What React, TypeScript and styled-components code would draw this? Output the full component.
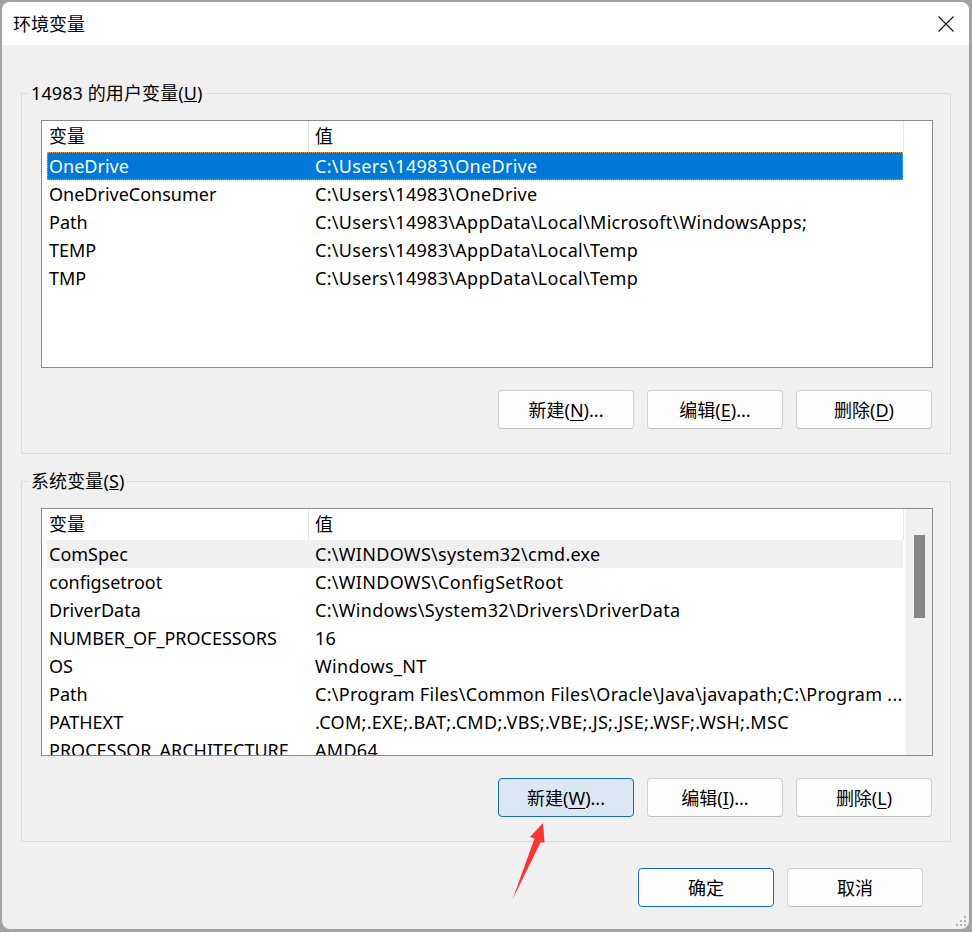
import React from 'react';
import styled, { createGlobalStyle } from 'styled-components';

const GlobalStyle = createGlobalStyle`
  html, body { margin: 0; padding: 0; background: #a3a3a3; }
  body { font-family: "Noto Sans", "Noto Sans CJK SC", sans-serif; }
  * { box-sizing: border-box; }
`;

const Page = styled.div`
  position: relative;
  width: 972px;
  height: 932px;
  padding: 2px 0 0 2px;
  overflow: hidden;
`;

const Window = styled.div`
  position: relative;
  width: 967px;
  height: 927px;
  background: #f0f0f0;
  border-radius: 8px;
  overflow: hidden;
  display: flex;
  flex-direction: column;
  font-size: 18px;
  color: #000;
`;

const TitleBar = styled.div`
  height: 43px;
  flex: none;
  background: #fff;
  display: flex;
  align-items: center;
  justify-content: space-between;
  padding-left: 11px;
`;

const Title = styled.div`
  font-size: 18px;
  line-height: 24px;
`;

const CloseButton = styled.div`
  width: 47px;
  height: 43px;
  display: flex;
  align-items: center;
  justify-content: center;
`;

const Body = styled.div`
  flex: 1;
  display: flex;
  flex-direction: column;
  padding: 36px 18px 0 19px;
`;

const Group = styled.fieldset`
  margin: 0;
  min-width: 0;
  padding: 15px 17px 24px 19px;
  border: 1px solid #dadada;
  & + & {
    margin-top: 15px;
  }
`;

const Legend = styled.legend`
  padding: 0 3px;
  margin-left: -13px;
  font-size: 18px;
  line-height: 24px;
  letter-spacing: 0.1px;
`;

const ListView = styled.div`
  height: 248px;
  border: 1px solid #8a8a8a;
  background: #fff;
  display: flex;
  overflow: hidden;
`;

const ListContent = styled.div`
  flex: 1;
  padding-left: 5px;
  display: flex;
  flex-direction: column;
  overflow: hidden;
`;

const HeaderRow = styled.div`
  height: 31px;
  flex: none;
  display: flex;
`;

const HeaderCell = styled.div<{ $w: number; $pad: number }>`
  width: ${(p) => p.$w}px;
  flex: none;
  padding-left: ${(p) => p.$pad}px;
  border-right: 1px solid #e5e5e5;
  line-height: 31px;
  white-space: nowrap;
`;

const Row = styled.div<{ $state?: 'selected' | 'hover' }>`
  width: 856px;
  height: 28px;
  flex: none;
  display: flex;
  line-height: 28px;
  white-space: nowrap;
  background: ${(p) =>
    p.$state === 'selected' ? '#0078d7' : p.$state === 'hover' ? '#f0f0f0' : 'transparent'};
  color: ${(p) => (p.$state === 'selected' ? '#fff' : '#000')};
  outline: ${(p) => (p.$state === 'selected' ? '1px dotted #e39a52' : 'none')};
  outline-offset: -1px;
`;

const Cell = styled.div<{ $w: number; $pad: number; $spacing?: number }>`
  width: ${(p) => p.$w}px;
  flex: none;
  padding-left: ${(p) => p.$pad}px;
  letter-spacing: ${(p) => p.$spacing ?? 0}px;
  overflow: hidden;
`;

const ScrollTrack = styled.div`
  width: 27px;
  flex: none;
  background: #f0f0f0;
  border-left: 1px solid #fafafa;
  display: flex;
  justify-content: center;
  padding-top: 26px;
`;

const ScrollThumb = styled.div`
  width: 11px;
  height: 83px;
  background: #868686;
`;

const ButtonRow = styled.div<{ $right: number; $top: number }>`
  display: flex;
  justify-content: flex-end;
  gap: 13px;
  margin-top: ${(p) => p.$top}px;
  margin-right: ${(p) => p.$right}px;
`;

const Button = styled.button<{ $variant?: 'default' | 'hot' }>`
  width: 136px;
  height: 39px;
  padding: 0;
  border-radius: 4px;
  font-family: inherit;
  font-size: 18px;
  color: #000;
  line-height: 24px;
  background: ${(p) => (p.$variant === 'hot' ? '#dbe7f3' : '#fdfdfd')};
  border: 1px solid
    ${(p) => (p.$variant === 'hot' || p.$variant === 'default' ? '#1469c0' : '#d0d0d0')};
  border-bottom-color: ${(p) =>
    p.$variant === 'hot' || p.$variant === 'default' ? '#1469c0' : '#bcbcbc'};
  u {
    text-underline-offset: 3px;
    text-decoration-thickness: 1px;
  }
`;

const Grip = styled.svg`
  position: absolute;
  right: 2px;
  bottom: 2px;
`;

const Annotation = styled.svg`
  position: absolute;
  left: 0;
  top: 0;
  pointer-events: none;
`;

type Item = { name: string; value: string; state?: 'selected' | 'hover' };

const userVars: Item[] = [
  { name: 'OneDrive', value: 'C:\\Users\\14983\\OneDrive', state: 'selected' },
  { name: 'OneDriveConsumer', value: 'C:\\Users\\14983\\OneDrive' },
  { name: 'Path', value: 'C:\\Users\\14983\\AppData\\Local\\Microsoft\\WindowsApps;' },
  { name: 'TEMP', value: 'C:\\Users\\14983\\AppData\\Local\\Temp' },
  { name: 'TMP', value: 'C:\\Users\\14983\\AppData\\Local\\Temp' },
];

const systemVars: Item[] = [
  { name: 'ComSpec', value: 'C:\\WINDOWS\\system32\\cmd.exe', state: 'hover' },
  { name: 'configsetroot', value: 'C:\\WINDOWS\\ConfigSetRoot' },
  { name: 'DriverData', value: 'C:\\Windows\\System32\\Drivers\\DriverData' },
  { name: 'NUMBER_OF_PROCESSORS', value: '16' },
  { name: 'OS', value: 'Windows_NT' },
  { name: 'Path', value: 'C:\\Program Files\\Common Files\\Oracle\\Java\\javapath;C:\\Program ...' },
  { name: 'PATHEXT', value: '.COM;.EXE;.BAT;.CMD;.VBS;.VBE;.JS;.JSE;.WSF;.WSH;.MSC' },
  { name: 'PROCESSOR_ARCHITECTURE', value: 'AMD64' },
  { name: 'PROCESSOR_IDENTIFIER', value: 'Intel64 Family 6' },
];

const VarList: React.FC<{ items: Item[]; scroll?: boolean }> = ({ items, scroll }) => (
  <ListView>
    <ListContent>
      <HeaderRow>
        <HeaderCell $w={262} $pad={2}>变量</HeaderCell>
        <HeaderCell $w={595} $pad={6}>值</HeaderCell>
      </HeaderRow>
      {items.map((it, i) => (
        <Row key={i} $state={it.state}>
          <Cell $w={262} $pad={2}>{it.name}</Cell>
          <Cell $w={594} $pad={6} $spacing={0.3}>{it.value}</Cell>
        </Row>
      ))}
    </ListContent>
    {scroll && (
      <ScrollTrack>
        <ScrollThumb />
      </ScrollTrack>
    )}
  </ListView>
);

export default function App() {
  return (
    <>
      <GlobalStyle />
      <Page>
        <Window>
          <TitleBar>
            <Title>环境变量</Title>
            <CloseButton>
              <svg width="16" height="16" viewBox="0 0 16 16">
                <path d="M0.5 0.5 L15.5 15.5 M15.5 0.5 L0.5 15.5" stroke="#1a1a1a" strokeWidth="1.2" fill="none" />
              </svg>
            </CloseButton>
          </TitleBar>
          <Body>
            <Group>
              <Legend>
                14983 的用户变量(<u>U</u>)
              </Legend>
              <VarList items={userVars} />
              <ButtonRow $top={22} $right={1}>
                <Button>新建(<u>N</u>)...</Button>
                <Button>编辑(<u>E</u>)...</Button>
                <Button>删除(<u>D</u>)</Button>
              </ButtonRow>
            </Group>
            <Group>
              <Legend>
                系统变量(<u>S</u>)
              </Legend>
              <VarList items={systemVars} scroll />
              <ButtonRow $top={22} $right={1}>
                <Button $variant="hot">新建(<u>W</u>)...</Button>
                <Button>编辑(<u>I</u>)...</Button>
                <Button>删除(<u>L</u>)</Button>
              </ButtonRow>
            </Group>
            <ButtonRow $top={26} $right={28}>
              <Button $variant="default">确定</Button>
              <Button>取消</Button>
            </ButtonRow>
          </Body>
          <Grip width="12" height="12" viewBox="0 0 12 12">
            <rect x="9" y="1" width="2" height="2" fill="#b4b4b4" />
            <rect x="5" y="5" width="2" height="2" fill="#b4b4b4" />
            <rect x="9" y="5" width="2" height="2" fill="#b4b4b4" />
            <rect x="1" y="9" width="2" height="2" fill="#b4b4b4" />
            <rect x="5" y="9" width="2" height="2" fill="#b4b4b4" />
            <rect x="9" y="9" width="2" height="2" fill="#b4b4b4" />
          </Grip>
        </Window>
        <Annotation width="972" height="932" viewBox="0 0 972 932">
          <polygon
            points="543,823 530,837 534.5,838.5 512.5,899.5 540.5,842.5 544.5,842.5"
            fill="#fb3535"
          />
        </Annotation>
      </Page>
    </>
  );
}
